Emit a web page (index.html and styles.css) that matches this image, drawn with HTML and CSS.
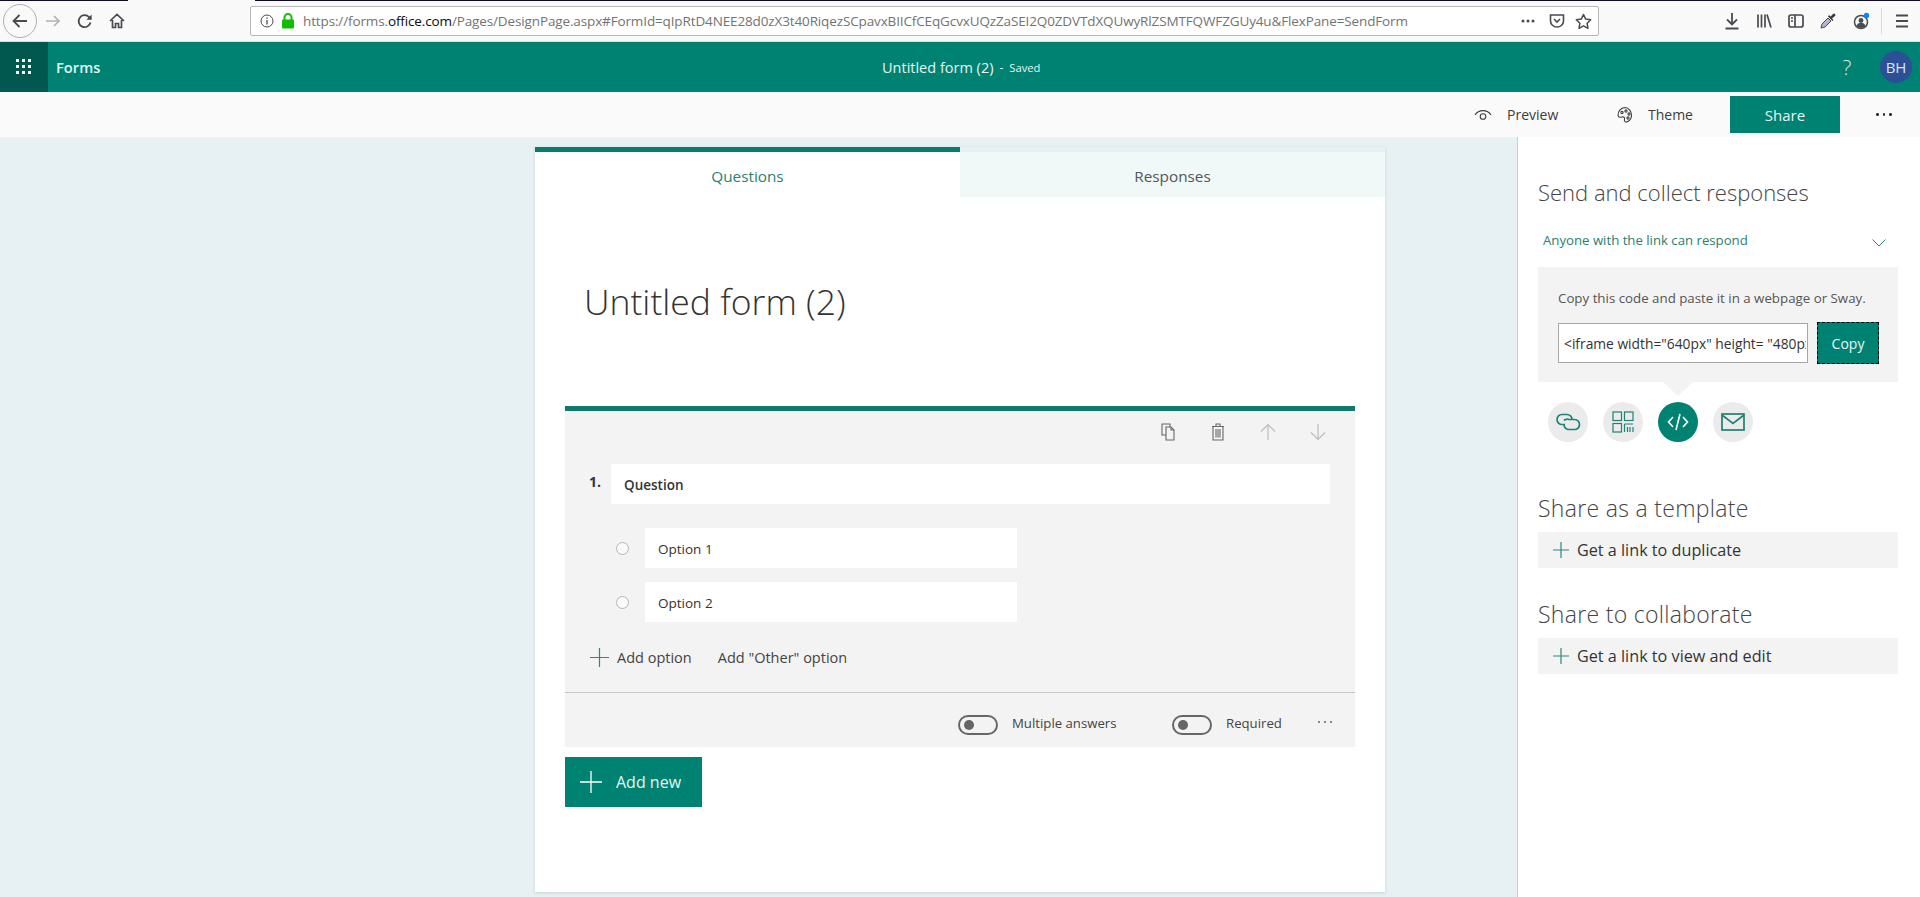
FILE: index.html
```html
<!DOCTYPE html>
<html lang="en">
<head>
<meta charset="utf-8">
<title>Untitled form (2) - Microsoft Forms</title>
<link rel="stylesheet" href="styles.css">
</head>
<body>
<div class="browser">
  <div class="tabline"><span class="tabline-a"></span><span class="tabline-b"></span></div>
  <div class="navrow">
    <div class="nav-left">
      <span class="back"><svg width="18" height="18" viewBox="0 0 18 18" fill="none" stroke="#4a4a4f" stroke-width="1.8"><path d="M16 9H2.5M8.5 3L2.5 9l6 6"/></svg></span>
      <svg class="ni" width="16" height="16" viewBox="0 0 16 16" fill="none" stroke="#b1b1b3" stroke-width="1.6"><path d="M1 8h13M9 3l5 5-5 5"/></svg>
      <svg class="ni" width="16" height="16" viewBox="0 0 16 16" fill="none" stroke="#4a4a4f" stroke-width="1.8"><path d="M13.500 9.500A6 6 0 1 1 12 4l2 2"/><path d="M14.600 1.600v5.200H9.400" fill="#4a4a4f" stroke="none"/></svg>
      <svg class="ni" width="16" height="16" viewBox="0 0 16 16" fill="none" stroke="#4a4a4f" stroke-width="1.7"><path d="M1 8l7-6.500L15 8M3.500 7v7.500h3v-4h3v4h3V7"/></svg>
    </div>
    <div class="urlbar">
      <svg class="info" width="14" height="14" viewBox="0 0 14 14" fill="none" stroke="#4a4a4f"><circle cx="7" cy="7" r="6"/><path d="M7 6v4.500M7 3.400v1.400" stroke-width="1.300"/></svg>
      <svg class="lock" width="14" height="16" viewBox="0 0 14 16"><path d="M3.500 7V4.600a3.500 3.500 0 0 1 7 0V7" fill="none" stroke="#12bc00" stroke-width="2"/><rect x="1" y="6.500" width="12" height="9" rx="1" fill="#12bc00"/></svg>
      <div class="url">https://forms.<b>office.com</b>/Pages/DesignPage.aspx#FormId=qIpRtD4NEE28d0zX3t40RiqezSCpavxBIICfCEqGcvxUQzZaSEI2Q0ZDVTdXQUwyRlZSMTFQWFZGUy4u&amp;FlexPane=SendForm</div>
      <div class="url-actions">
        <svg width="16" height="16" viewBox="0 0 16 16" fill="#4a4a4f"><circle cx="3" cy="8" r="1.500"/><circle cx="8" cy="8" r="1.500"/><circle cx="13" cy="8" r="1.500"/></svg>
        <svg width="16" height="16" viewBox="0 0 16 16" fill="none" stroke="#4a4a4f" stroke-width="1.600"><path d="M1.500 2h13v6a6.500 6 0 0 1-13 0z"/><path d="M5 6l3 3 3-3"/></svg>
        <svg width="17" height="17" viewBox="0 0 17 17" fill="none" stroke="#4a4a4f" stroke-width="1.500" stroke-linejoin="round"><path d="M8.500 1.500l2.200 4.600 5 .7-3.600 3.500.9 5-4.500-2.400L4 15.300l.9-5L1.300 6.800l5-.7z"/></svg>
      </div>
    </div>
    <div class="nav-right">
      <svg width="16" height="18" viewBox="0 0 16 18" fill="none" stroke="#4a4a4f" stroke-width="1.800"><path d="M8 1v11M3 7.500l5 5 5-5M1.500 16.500h13"/></svg>
      <svg width="16" height="16" viewBox="0 0 16 16" fill="none" stroke="#4a4a4f" stroke-width="1.700"><path d="M2 1.500v13M5.500 1.500v13M9 1.500v13M11 1.500l4 13"/></svg>
      <svg width="16" height="16" viewBox="0 0 16 16" fill="none" stroke="#4a4a4f" stroke-width="1.700"><rect x="1" y="2" width="14" height="12" rx="2"/><path d="M7 2v12M3 5h2M3 8h2"/></svg>
      <svg width="16" height="16" viewBox="0 0 16 16"><path d="M1 15l1-4 6-6 3 3-6 6z" fill="#b9b4d6" stroke="#4a4a4f" stroke-width="1"/><path d="M8 3.500l4.500 4.500 1-1-1.500-1.500L15 3a1.400 1.400 0 0 0-2-2l-2.500 2.500L9 2z" fill="#3a3a3f"/></svg>
      <svg width="18" height="18" viewBox="0 0 18 18"><circle cx="9" cy="10" r="6.500" fill="none" stroke="#4a4a4f" stroke-width="1.500"/><circle cx="9" cy="8.500" r="2.400" fill="#4a4a4f"/><path d="M4.500 14a4.800 4.800 0 0 1 9 0 6 6 0 0 1-9 0z" fill="#4a4a4f"/><circle cx="14.500" cy="3.500" r="2.700" fill="#0a84ff"/></svg>
      <span class="nav-sep"></span>
      <svg width="16" height="14" viewBox="0 0 16 14" fill="none" stroke="#4a4a4f" stroke-width="1.800"><path d="M2 1.500h12M2 7h12M2 12.500h12"/></svg>
    </div>
  </div>
</div>

<header class="suitebar">
  <div class="waffle"><svg width="16" height="16" viewBox="0 0 16 16" fill="#fff"><rect x="0" y="0" width="3" height="3"/><rect x="6" y="0" width="3" height="3"/><rect x="12" y="0" width="3" height="3"/><rect x="0" y="6" width="3" height="3"/><rect x="6" y="6" width="3" height="3"/><rect x="12" y="6" width="3" height="3"/><rect x="0" y="12" width="3" height="3"/><rect x="6" y="12" width="3" height="3"/><rect x="12" y="12" width="3" height="3"/></svg></div>
  <div class="brand">Forms</div>
  <div class="doc-title"><span class="doc-name">Untitled form (2)</span><span class="doc-dash">-</span><span class="doc-saved">Saved</span></div>
  <div class="help">?</div>
  <div class="avatar">BH</div>
</header>

<div class="commandbar">
  <div class="cmd cmd-preview"><svg width="18" height="14" viewBox="0 0 18 14" fill="none" stroke="#3c3c3c" stroke-width="1.100"><path d="M1 7a9.500 9.500 0 0 1 16 0"/><circle cx="9" cy="8.500" r="2.800"/></svg><span>Preview</span></div>
  <div class="cmd cmd-theme"><svg width="18" height="18" viewBox="0 0 18 18" fill="none" stroke="#3c3c3c" stroke-width="1.100"><path d="M9 1.500a7.500 7.500 0 0 0-7 8c.4 2 2.500 2 4 1.500s3 .5 2.500 2 .5 3.500 2 3c3-1 5-3.500 5-6.500 0-4.500-3-8-6.500-8z"/><circle cx="6" cy="6.500" r="1.100"/><circle cx="10" cy="5" r="1.100"/><circle cx="13" cy="8" r="1.100"/><circle cx="12" cy="12" r="1.100"/></svg><span>Theme</span></div>
  <div class="share-btn">Share</div>
  <div class="cmd-more"><span></span><span></span><span></span></div>
</div>

<main class="workspace">
  <section class="canvas">
    <div class="formcard">
      <div class="tabs">
        <div class="tab tab-active">Questions</div>
        <div class="tab tab-idle">Responses</div>
      </div>
      <h1 class="form-title">Untitled form (2)</h1>
      <div class="question">
        <div class="q-tools">
          <svg width="16" height="18" viewBox="0 0 16 18" fill="none" stroke="#666" stroke-width="1.100"><path d="M10 4V1H2v11h4"/><path d="M6 4h5l3 3v10H6z"/><path d="M11 4v3h3"/></svg>
          <svg width="16" height="18" viewBox="-1 0 16 18" fill="none" stroke="#666" stroke-width="1.100"><path d="M1 3.500h12M5 3.500V1h4v2.500M2 3.500V17h10V3.500M5 6v8.500M7 6v8.500M9 6v8.500"/></svg>
          <svg width="16" height="18" viewBox="0 0 16 18" fill="none" stroke="#bdbdbd" stroke-width="1.200"><path d="M8 17V1.500M1 8.500l7-7 7 7"/></svg>
          <svg width="16" height="18" viewBox="0 0 16 18" fill="none" stroke="#bdbdbd" stroke-width="1.200"><path d="M8 1v15.500M1 9.500l7 7 7-7"/></svg>
        </div>
        <div class="q-head">
          <span class="q-num">1.</span>
          <div class="q-input">Question</div>
        </div>
        <div class="q-opt"><span class="radio"></span><div class="opt-input">Option 1</div></div>
        <div class="q-opt"><span class="radio"></span><div class="opt-input">Option 2</div></div>
        <div class="q-add">
          <svg width="19" height="19" viewBox="0 0 19 19" fill="none" stroke="#2b8a7c" stroke-width="1.200"><path d="M9.500 0v19M0 9.500h19"/></svg>
          <span class="add-option">Add option</span>
          <span>Add "Other" option</span>
        </div>
        <div class="q-foot">
          <span class="toggle"></span><span class="t-label t-label-multi">Multiple answers</span>
          <span class="toggle"></span><span class="t-label t-label-req">Required</span>
          <span class="foot-more"><span></span><span></span><span></span></span>
        </div>
      </div>
      <div class="addnew"><svg width="22" height="22" viewBox="0 0 22 22" fill="none" stroke="#fff" stroke-width="1.300"><path d="M11 0v22M0 11h22"/></svg><span>Add new</span></div>
    </div>
  </section>

  <aside class="panel">
    <h2 class="p-head p-head-first">Send and collect responses</h2>
    <div class="audience"><span>Anyone with the link can respond</span><svg width="14" height="8" viewBox="0 0 14 8" fill="none" stroke="#2b8a7c" stroke-width="1"><path d="M.5.500L7 7l6.500-6.500"/></svg></div>
    <div class="embed">
      <p class="embed-hint">Copy this code and paste it in a webpage or Sway.</p>
      <div class="embed-row">
        <input class="embed-code" readonly value='&lt;iframe width="640px" height= "480px" src="https://forms.office.com/Pages/ResponsePage.aspx"'>
        <div class="copy-btn">Copy</div>
      </div>
    </div>
    <div class="methods">
      <span class="method"><svg width="26" height="18" viewBox="0 0 26 18" fill="none" stroke="#1f8273" stroke-width="1.700"><path d="M10 11.500H7a5 5 0 0 1 0-10h5a5 5 0 0 1 5 5"/><path d="M9 7.500a5 5 0 0 1 5-1h5.500a5 5 0 0 1 0 10H14a5 5 0 0 1-5-5"/></svg></span>
      <span class="method"><svg width="22" height="22" viewBox="0 0 22 22" fill="none" stroke="#1f8273" stroke-width="1.200"><rect x="1" y="1" width="8.500" height="8.500"/><rect x="12.500" y="1" width="8.500" height="8.500"/><rect x="1" y="12.500" width="8.500" height="8.500"/><path d="M12.500 13v8M15.500 16v5M18 16v5M21 16v5M12.500 13H21"/></svg></span>
      <span class="method method-on"><svg width="22" height="18" viewBox="0 0 22 18" fill="none" stroke="#fff" stroke-width="1.600"><path d="M6 4L1.500 9 6 14M16 4l4.500 5L16 14M13 1L9 17"/></svg></span>
      <span class="method"><svg width="24" height="18" viewBox="0 0 24 18" fill="none" stroke="#1f8273" stroke-width="1.700"><rect x="1" y="1" width="22" height="16"/><path d="M1 2l11 8.500L23 2"/></svg></span>
    </div>
    <h2 class="p-head p-head-tpl">Share as a template</h2>
    <div class="link-row"><svg width="16" height="16" viewBox="0 0 16 16" fill="none" stroke="#2b8a7c" stroke-width="1.200"><path d="M8 0v16M0 8h16"/></svg><span>Get a link to duplicate</span></div>
    <h2 class="p-head p-head-col">Share to collaborate</h2>
    <div class="link-row"><svg width="16" height="16" viewBox="0 0 16 16" fill="none" stroke="#2b8a7c" stroke-width="1.200"><path d="M8 0v16M0 8h16"/></svg><span>Get a link to view and edit</span></div>
  </aside>
</main>
</body>
</html>
```
FILE: styles.css
```css
* { box-sizing: border-box; }
html, body { margin: 0; height: 100%; }
body {
  height: 897px;
  overflow: hidden;
  font-family: "Open Sans", "Noto Sans", "Liberation Sans", sans-serif;
  font-stretch: 90%;
  color: #333;
  background: #e7f0f3;
  display: flex;
  flex-direction: column;
}

/* browser chrome */
.browser { height: 42px; background: #f9f9fa; border-bottom: 1px solid #cfe3e3; flex: none; }
.tabline { display: flex; height: 1px; }
.tabline-a { width: 128px; background: #0c0c20; }
.tabline-b { margin-left: 127px; flex: 1; background: #0c0c20; }
.navrow { display: flex; align-items: center; height: 40px; }
.nav-left { display: flex; align-items: center; width: 250px; flex: none; padding-left: 3px; }
.back { width: 34px; height: 34px; border: 1px solid #b1b1b3; border-radius: 50%; display: flex; align-items: center; justify-content: center; flex: none; }
.ni { margin-left: 16px; }
.nav-left .back + .ni { margin-left: 8px; }
.urlbar { width: 1349px; height: 30px; flex: none; display: flex; align-items: center; background: #fff; border: 1px solid #b8b8bb; border-radius: 2px; padding: 0 6px 0 9px; }
.lock { margin-left: 7px; flex: none; }
.info { flex: none; }
.url { margin-left: 8px; flex: 1; min-width: 0; font-size: 13.500px; color: #737373; white-space: nowrap; overflow: hidden; font-stretch: 100%; letter-spacing: -.13px; font-weight: 400; }
.url b { font-weight: 400; color: #0c0c0d; }
.url-actions { display: flex; align-items: center; gap: 13px; flex: none; }
.url-actions svg:last-child { margin-left: -3px; }
.nav-right { display: flex; align-items: center; gap: 16px; margin-left: 125px; flex: none; }
.nav-sep { width: 1px; height: 26px; background: #dcdcdc; margin: 0 -4px 0 -5px; }

/* suite header */
.suitebar { height: 50px; flex: none; display: flex; align-items: center; background: #008272; color: #fff; }
.waffle { width: 48px; height: 50px; background: #00584e; display: flex; align-items: center; justify-content: center; flex: none; }
.brand { width: 150px; margin-left: 8px; font-size: 14.700px; font-weight: 600; color: #dffaf4; flex: none; }
.doc-title { margin-left: 676px; width: 870px; flex: none; display: flex; align-items: center; color: #e4f5f2; }
.doc-name { font-size: 14.500px; }
.doc-dash { font-size: 12px; margin: 0 6px; }
.doc-saved { font-size: 11.200px; }
.help { margin-left: 75px; width: 40px; flex: none; font-size: 21px; font-weight: 300; text-align: center; color: #d5ece8; }
.avatar { margin-left: 13px; width: 32px; height: 32px; flex: none; border-radius: 50%; background: #2c4f96; color: #d8e6f5; font-size: 15px; display: flex; align-items: center; justify-content: center; }

/* command bar */
.commandbar { height: 45px; flex: none; background: #fafafa; display: flex; align-items: center; padding-left: 1474px; }
.cmd { display: flex; align-items: center; gap: 15px; font-size: 14px; color: #3c3c3c; flex: none; }
.cmd-preview { width: 142px; }
.cmd-theme { width: 114px; gap: 14px; }
.share-btn { width: 110px; height: 37px; flex: none; background: #008272; color: #e6f7f3; font-size: 15px; display: flex; align-items: center; justify-content: center; }
.cmd-more { margin-left: 36px; display: flex; gap: 4px; }
.cmd-more span { width: 2.500px; height: 2.500px; background: #333; border-radius: 50%; }

/* main */
.workspace { flex: 1; min-height: 0; display: flex; }
.canvas { width: 1517px; flex: none; padding: 10px 0 0 535px; }
.formcard { width: 850px; height: 745px; background: #fff; box-shadow: 0 1px 3px rgba(0,0,0,.12); }
.tabs { display: flex; height: 50px; }
.tab { display: flex; align-items: center; justify-content: center; font-size: 15.300px; padding-top: 2px; }
.tab-active { width: 425px; height: 50px; border-top: 5px solid #0d7a6c; color: #1f8273; background: #fff; }
.tab-idle { width: 425px; height: 45px; margin-top: 5px; background: #f1f8f8; color: #555; box-shadow: 0 -5px 0 #e7f0f3; }
.form-title { margin: 74px 0 0 49px; height: 60px; font-size: 35.500px; line-height: 60px; font-weight: 300; color: #333; }
.question { margin: 75px 30px 0 30px; height: 341px; background: #f3f3f3; border-top: 5px solid #0d7a6c; }
.q-tools { display: flex; align-items: center; height: 42px; padding-left: 595px; gap: 34px; margin-bottom: 11px; }
.q-head { display: flex; align-items: flex-start; padding-left: 24px; }
.q-num { font-size: 14px; font-weight: 700; width: 22px; margin-top: 8px; color: #333; }
.q-input { width: 719px; height: 40px; background: #fff; padding-left: 13px; font-size: 13.500px; font-weight: 600; line-height: 42px; color: #333; }
.q-opt { display: flex; align-items: center; padding-left: 51px; margin-top: 14px; }
.q-head + .q-opt { margin-top: 24px; }
.radio { width: 13px; height: 13px; border: 1px solid #b5b5b5; border-radius: 50%; background: #fafafa; flex: none; }
.opt-input { width: 372px; height: 40px; margin-left: 16px; background: #fff; padding-left: 13px; font-size: 13.500px; line-height: 42px; color: #333; }
.q-add { display: flex; align-items: center; height: 40px; margin-top: 15px; padding-left: 25px; font-size: 14.500px; color: #444; }
.add-option { margin: 0 26px 0 8px; }
.q-foot { display: flex; align-items: center; height: 55px; margin-top: 15px; border-top: 1px solid #c8c8c8; padding-left: 393px; font-size: 13.200px; color: #444; }
.toggle { width: 40px; height: 20px; border: 2px solid #666; border-radius: 10px; position: relative; flex: none; margin-top: 10px; }
.toggle::after { content: ""; position: absolute; left: 4px; top: 3px; width: 10px; height: 10px; border-radius: 50%; background: #666; }
.t-label { margin-left: 14px; padding-top: 5px; }
.t-label-multi { width: 160px; }
.t-label-req { width: 92px; }
.foot-more { display: flex; gap: 4px; margin-top: 4px; }
.foot-more span { width: 2px; height: 2px; background: #666; border-radius: 50%; }
.addnew { width: 137px; height: 50px; margin: 10px 0 0 30px; background: #008272; color: #e4f7f2; display: flex; align-items: center; padding-left: 15px; gap: 14px; font-size: 16px; }

/* right panel */
.panel { flex: 1; background: #fff; border-left: 1px solid #c5d0d4; padding: 0 22px 0 20px; }
.p-head { margin: 0; font-size: 22px; line-height: 28px; font-weight: 300; color: #444; }
.p-head-first { margin-top: 41px; }
.audience { display: flex; align-items: center; justify-content: space-between; margin-top: 19px; height: 30px; padding: 0 12px 0 5px; font-size: 13.200px; color: #1f8273; }
.audience svg { margin-top: 6px; }
.embed { position: relative; height: 115px; margin-top: 12px; background: #f3f3f3; padding: 20px 19px 0 20px; }
.embed::after { content: ""; position: absolute; left: 125px; bottom: -14px; border: 15px solid transparent; border-bottom: 0; border-top: 14px solid #f3f3f3; }
.embed-hint { margin: 0; font-size: 13.300px; line-height: 22px; color: #555; white-space: nowrap; }
.embed-row { display: flex; align-items: center; margin-top: 13px; }
.embed-code { width: 250px; height: 40px; padding: 0 1px 0 5px; border: 1px solid #a6a6a6; background: #fff; font: inherit; font-size: 13.800px; color: #333; outline: none; }
.copy-btn { width: 62px; height: 42px; margin-left: 9px; background: #008272; outline: 1px dashed #000; outline-offset: -1px; color: #e9f8f5; font-size: 14px; display: flex; align-items: center; justify-content: center; }
.methods { display: flex; gap: 15px; margin-top: 20px; padding-left: 10px; }
.method { width: 40px; height: 40px; border-radius: 50%; background: #ebebeb; display: flex; align-items: center; justify-content: center; }
.method-on { background: #008272; }
.p-head-tpl { margin-top: 52px; font-size: 23px; letter-spacing: .3px; }
.p-head-col { margin-top: 32px; font-size: 23px; letter-spacing: .3px; }
.link-row { display: flex; align-items: center; height: 36px; margin-top: 10px; background: #f3f3f3; padding-left: 15px; gap: 8px; font-size: 16.200px; color: #333; }
```
